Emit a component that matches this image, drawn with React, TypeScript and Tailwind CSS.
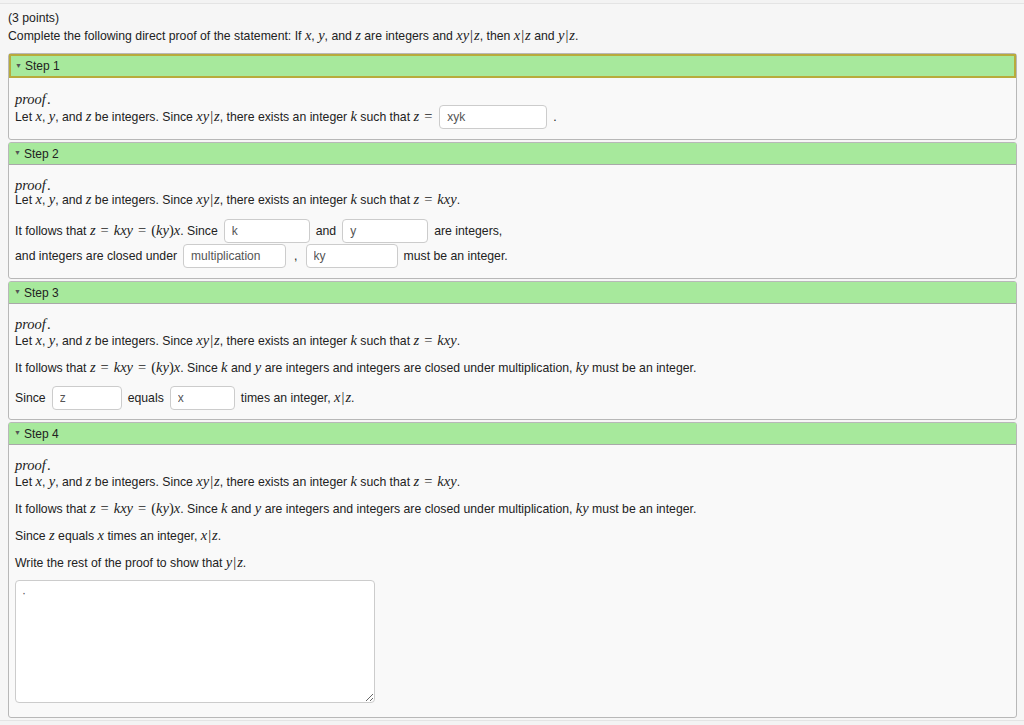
import React from "react";

const SERIF = '"Liberation Serif", serif';

const M = ({ children }: { children: React.ReactNode }) => (
  <span className="italic text-[14.5px]" style={{ fontFamily: SERIF }}>
    {children}
  </span>
);
const Eq = ({ tight }: { tight?: boolean }) => (
  <span className={(tight ? "ml-[5px] mr-[1px]" : "mx-[5px]") + " text-[14.5px]"} style={{ fontFamily: SERIF }}>
    =
  </span>
);
const Bar = () => (
  <span className="mx-[1px] text-[14.5px]" style={{ fontFamily: SERIF }}>
    |
  </span>
);
const P = ({ children }: { children: React.ReactNode }) => (
  <span className="text-[14.5px]" style={{ fontFamily: SERIF }}>
    {children}
  </span>
);

const Field = ({ v, w }: { v: string; w: number }) => (
  <input
    readOnly
    value={v}
    style={{ width: w }}
    className="mx-[6px] inline-block h-[24px] rounded-[4px] border border-[#cccccc] bg-white px-[7px] align-middle text-[12px] text-[#555] outline-none"
  />
);

const Proof = () => (
  <div className="h-[14px] leading-[14px]">
    <span className="italic text-[14.5px]" style={{ fontFamily: SERIF }}>
      proof
    </span>
    <span className="ml-[1px] text-[14.5px]" style={{ fontFamily: SERIF }}>
      .
    </span>
  </div>
);

const LetLine = ({ tail, tight }: { tail?: React.ReactNode; tight?: boolean }) => (
  <>
    Let <M>x</M>, <M>y</M>, and <M>z</M> be integers. Since <M>xy</M>
    <Bar />
    <M>z</M>, there exists an integer <M>k</M> such that <M>z</M>
    <Eq tight={tight} />
    {tail}
  </>
);

const FollowsLine = () => (
  <>
    It follows that <M>z</M>
    <Eq />
    <M>kxy</M>
    <Eq />
    <P>(</P>
    <M>ky</M>
    <P>)</P>
    <M>x</M>.
  </>
);

const Header = ({ n, focus }: { n: number; focus?: boolean }) => (
  <div
    className={
      "flex items-center bg-[#a7e99c] text-[12px] text-[#222] " +
      (focus
        ? "h-[24px] border-2 border-[#b8ab3c] pl-[4px]"
        : "h-[22px] border-b border-[#a9a9a9] pl-[5px]")
    }
  >
    <span className="mr-[3px] text-[7px] text-[#555]">▼</span>
    <span>Step {n}</span>
  </div>
);

const Panel = ({
  n,
  focus,
  children,
  cls,
}: {
  n: number;
  focus?: boolean;
  children: React.ReactNode;
  cls?: string;
}) => (
  <div className={"rounded-[3px] border border-[#b8b8b8] bg-[#f9f9f9] " + (cls || "")}>
    <Header n={n} focus={focus} />
    <div className="px-[6px]">{children}</div>
  </div>
);

export default function App() {
  return (
    <div
      className="h-[725px] w-[1024px] overflow-hidden bg-[#f3f3f3] text-[12.25px] text-[#222]"
      style={{ fontFamily: '"Liberation Sans", Arial, sans-serif' }}
    >
      <div className="mt-[3px] h-[718px] border-y border-[#e4e4e4] bg-[#f6f6f6] pl-[8px] pr-[7px] pt-[6px]">
        <div className="h-[16px] leading-[16px]">(3 points)</div>
        <div className="mt-[1px] h-[16px] leading-[16px] whitespace-pre">
          Complete the following direct proof of the statement: If <M>x</M>, <M>y</M>, and <M>z</M> are
          integers and <M>xy</M>
          <Bar />
          <M>z</M>, then <M>x</M>
          <Bar />
          <M>z</M> and <M>y</M>
          <Bar />
          <M>z</M>.
        </div>

        <Panel n={1} focus cls="mt-[10px]">
          <div className="pt-[14px] pb-[10px]">
            <Proof />
            <div className="mt-[-1px] flex h-[24px] items-center whitespace-pre">
              <span>
                <LetLine tight />
              </span>
              <Field v="xyk" w={108} />
              <span>.</span>
            </div>
          </div>
        </Panel>

        <Panel n={2} cls="mt-[2px]">
          <div className="pt-[13px] pb-[10px]">
            <Proof />
            <div className="h-[14px] leading-[14px] whitespace-pre">
              <LetLine
                tail={
                  <>
                    <M>kxy</M>.
                  </>
                }
              />
            </div>
            <div className="mt-[13px] flex h-[24px] items-center whitespace-pre">
              <span>
                <FollowsLine /> Since
              </span>
              <Field v="k" w={86} />
              <span>and</span>
              <Field v="y" w={86} />
              <span>are integers,</span>
            </div>
            <div className="mt-[1px] flex h-[24px] items-center whitespace-pre">
              <span>and integers are closed under</span>
              <Field v="multiplication" w={103} />
              <span className="mx-[2px]">,</span>
              <Field v="ky" w={92} />
              <span>must be an integer.</span>
            </div>
          </div>
        </Panel>

        <Panel n={3} cls="mt-[2px]">
          <div className="pt-[13px] pb-[9px]">
            <Proof />
            <div className="mt-[2px] h-[14px] leading-[14px] whitespace-pre">
              <LetLine
                tail={
                  <>
                    <M>kxy</M>.
                  </>
                }
              />
            </div>
            <div className="mt-[13px] h-[14px] leading-[14px] whitespace-pre">
              <FollowsLine /> Since <M>k</M> and <M>y</M> are integers and integers are closed under
              multiplication, <M>ky</M> must be an integer.
            </div>
            <div className="mt-[12px] flex h-[24px] items-center whitespace-pre">
              <span>Since</span>
              <Field v="z" w={70} />
              <span>equals</span>
              <Field v="x" w={65} />
              <span>
                times an integer, <M>x</M>
                <Bar />
                <M>z</M>.
              </span>
            </div>
          </div>
        </Panel>

        <Panel n={4} cls="mt-[2px]">
          <div className="pt-[13px] pb-[14px]">
            <Proof />
            <div className="mt-[2px] h-[14px] leading-[14px] whitespace-pre">
              <LetLine
                tail={
                  <>
                    <M>kxy</M>.
                  </>
                }
              />
            </div>
            <div className="mt-[13px] h-[14px] leading-[14px] whitespace-pre">
              <FollowsLine /> Since <M>k</M> and <M>y</M> are integers and integers are closed under
              multiplication, <M>ky</M> must be an integer.
            </div>
            <div className="mt-[13px] h-[14px] leading-[14px] whitespace-pre">
              Since <M>z</M> equals <M>x</M> times an integer, <M>x</M>
              <Bar />
              <M>z</M>.
            </div>
            <div className="mt-[13px] h-[14px] leading-[14px] whitespace-pre">
              Write the rest of the proof to show that <M>y</M>
              <Bar />
              <M>z</M>.
            </div>
            <textarea
              readOnly
              value="·"
              className="mt-[11px] block h-[123px] w-[360px] resize rounded-[4px] border border-[#cccccc] bg-white px-[6px] py-[3px] text-[12px] text-[#555] outline-none"
            />
          </div>
        </Panel>
      </div>
    </div>
  );
}
